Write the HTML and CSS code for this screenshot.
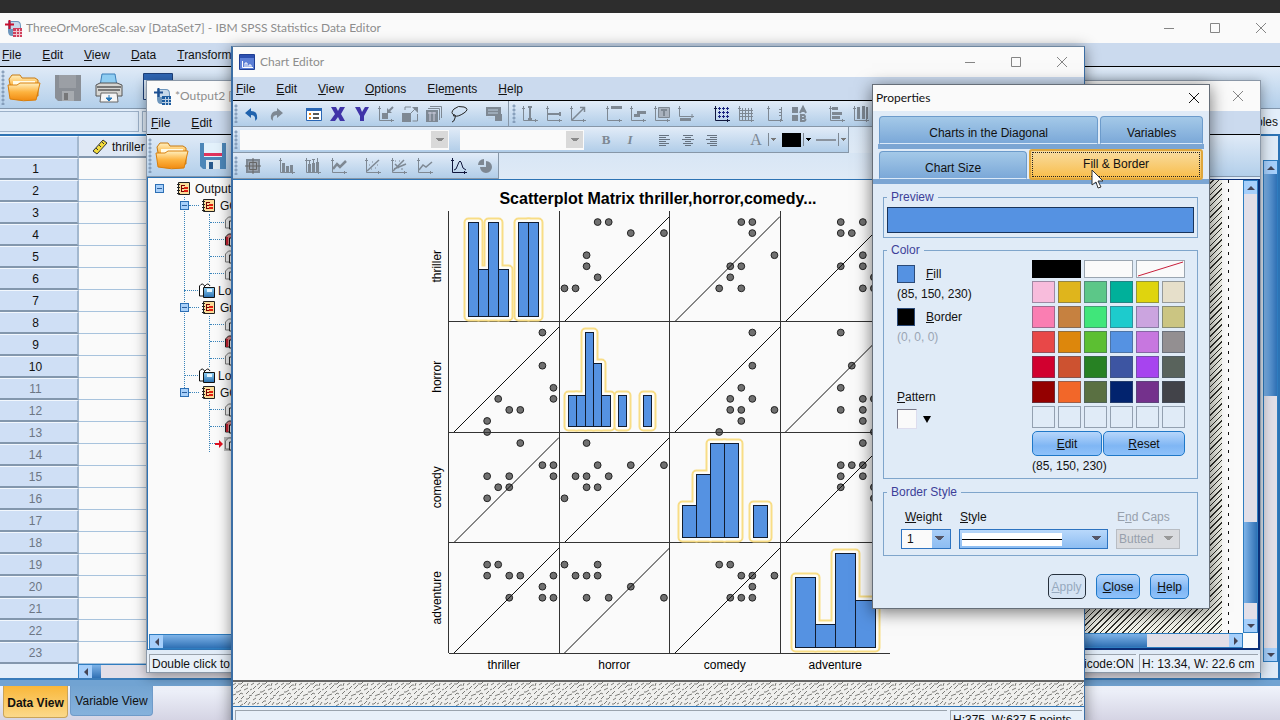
FILE: index.html
```html
<!DOCTYPE html>
<html lang="en">
<head>
<meta charset="utf-8">
<title>ThreeOrMoreScale.sav [DataSet7] - IBM SPSS Statistics Data Editor</title>
<link rel="stylesheet" href="styles.css">
</head>
<body>
<svg class="defs" aria-hidden="true">
  <defs>
    <linearGradient id="gFolder" x1="0" y1="0" x2="0" y2="1"><stop offset="0" stop-color="#fff0c0"/><stop offset=".5" stop-color="#fdb340"/><stop offset="1" stop-color="#f08a10"/></linearGradient>
    <linearGradient id="gBlue" x1="0" y1="0" x2="0" y2="1"><stop offset="0" stop-color="#8fd0f4"/><stop offset="1" stop-color="#2a6fb0"/></linearGradient>
    <pattern id="granite" width="24" height="24" patternUnits="userSpaceOnUse">
      <rect width="24" height="24" fill="#efefed"/>
      <path d="M0 3l3-2M5 2h3l2-2M1 7l4-4M8 6l3-3h2M15 1l-1 3M18 3l3-2M23 4l-3 3M3 10h2l3-2M11 8l4-2M17 8l2-1M22 9l-3 3M0 13l3-1M6 13l2-2 2 1M13 12l3-3M16 14l3-1M22 14l2-1M2 18l3-3M8 17l3-3M13 17h2l2-2M20 18l3-2M0 22l2-1M5 21l2-2h2M11 22l3-3M17 20l-2 3M19 22h2l2-2M7 24l3-2" stroke="#7d7d7a" fill="none"/>
    </pattern>
    <symbol id="folder" viewBox="0 0 34 30"><path d="M2 6l3-4h8l2 3h13l3 2v16H5z" fill="url(#gFolder)" stroke="#c87a10"/><path d="M6 8h22v4H6z" fill="#fffbe8"/><path d="M1 12h9l3-2h20l-4 17q-12 2-26-1z" fill="url(#gFolder)" stroke="#d9800e"/></symbol>
    <symbol id="disk" viewBox="0 0 26 26"><path d="M0 0h26v26H3l-3-3z" fill="currentColor"/><path d="M4 0h17v13H4z" fill="#fff" opacity=".15"/><path d="M7 16h12v10H7z" fill="#fff" opacity=".25"/><path d="M9 18h4v7H9z" fill="#555" opacity=".6"/></symbol>
    <symbol id="book" viewBox="0 0 14 15"><path d="M2.500 1.500h11v12h-11z" fill="#fbdc98" stroke="#222"/><path d="M5.500 4v7M6 4.500h3M6 7.500h3M6 10.500h3" stroke="#700" fill="none"/><path d="M8 6h4v2H8zM8 9h4v2H8z" fill="#e02010"/><path d="M1 3.500h3M1 6.500h3M1 9.500h3M1 12.500h3" stroke="#222" stroke-dasharray="1 1"/></symbol>
    <symbol id="log" viewBox="0 0 17 16"><path d="M1.500 3q3-4 5 0v10h-5z" fill="#fff" stroke="#111"/><path d="M7 3q3-4 5 0" fill="#fff" stroke="#111"/><path d="M5.500 4.500h11v10h-11z" fill="url(#gBlue)" stroke="#111"/><path d="M9 6h5v3H9z" fill="#e6f6ff"/></symbol>
    <symbol id="page" viewBox="0 0 15 14"><path d="M1.500 12V4l3-3h6v11z" fill="#eee" stroke="#777"/><path d="M5.500 13V5h9v8z" fill="#f6f6f6" stroke="#333"/><path d="M7 8h6M7 10h6" stroke="#777"/></symbol>
    <symbol id="pageR" viewBox="0 0 15 14"><path d="M1.500 12V4l3-3h6v11z" fill="#d88" stroke="#222"/><path d="M2 4h2v8H2z" fill="#c02030"/><path d="M5.500 13V5h9v8z" fill="#f6f6f6" stroke="#111"/></symbol>
    <symbol id="axes" viewBox="0 0 16 16"><path d="M1.500 0v14.500H16M0 2.500h3M13.500 13v3" fill="none" stroke="currentColor"/></symbol>
    <symbol id="min" viewBox="0 0 12 12"><path d="M1 6.500h10" stroke="currentColor"/></symbol>
    <symbol id="max" viewBox="0 0 12 12"><path d="M1.500 1.500h9v9h-9z" fill="none" stroke="currentColor"/></symbol>
    <symbol id="x" viewBox="0 0 12 12"><path d="M1 1l10 10M11 1L1 11" fill="none" stroke="currentColor"/></symbol>
    <symbol id="spss" viewBox="0 0 17 17"><path d="M3 1h9q4 0 4 5v10H7q-4 0-4-5z" fill="#6d96bd"/><path d="M6 2h6q3 0 3 4v3H6z" fill="#c6d9ea"/><path d="M0 4.500h9M4.500 0v9" stroke="var(--plus)" stroke-width="2"/><path d="M8 8h9v9H8z" fill="var(--grid)"/><path d="M8 11.500h9M8 14.500h9M11.500 9v8M14.500 9v8" stroke="#fff" stroke-width="1" opacity=".7"/></symbol>
  </defs>
</svg>
<div class="desktop">

  <section class="window main" aria-label="Data Editor">
    <header class="title">
      <svg class="app red"><use href="#spss"/></svg>
      <h1>ThreeOrMoreScale.sav [DataSet7] - IBM SPSS Statistics Data Editor</h1>
      <div class="controls"><button aria-label="Minimize"><svg><use href="#min"/></svg></button><button aria-label="Maximize"><svg><use href="#max"/></svg></button><button aria-label="Close"><svg><use href="#x"/></svg></button></div>
    </header>
    <nav class="menu"><button><u>F</u>ile</button><button><u>E</u>dit</button><button><u>V</u>iew</button><button><u>D</u>ata</button><button><u>T</u>ransform</button></nav>
    <div class="bigbar"><i class="grip"></i>
      <button aria-label="Open"><svg class="i34"><use href="#folder"/></svg></button>
      <button aria-label="Save" class="dim"><svg class="i26"><use href="#disk"/></svg></button>
      <button aria-label="Print"><svg class="i30" viewBox="0 0 30 30"><path d="M8 1h13l2 12H6z" fill="#8fcdf2" stroke="#3b7fb8"/><path d="M2 12l4-2h17l5 2v11H2z" fill="#d5d5d2" stroke="#555"/><path d="M3 14h24M4 17h22" stroke="#777" stroke-width="2"/><path d="M7 20h16l1 9H6z" fill="#f5f5f5" stroke="#666"/><path d="M15 22v4M12 25h6l-3 3z" stroke="#2878b8" fill="#2878b8"/></svg></button>
      <button aria-label="Recall" class="recall"><svg class="i30" viewBox="0 0 30 30"><path d="M.500.500h29v26H.500z" fill="#dbe8f6" stroke="#1c3f78"/><path d="M1 1h28v6H1z" fill="#2e66b4"/></svg></button>
    </div>
    <div class="valuebar"><span class="cellname"></span><span class="cellvalue"></span><span class="visible">Visible: 4 of 4 Variables</span></div>
    <div class="sheet">
      <div class="gridwrap">
      <table class="grid">
        <thead><tr><th></th><th scope="col"><span class="var"><svg viewBox="0 0 16 16"><path d="M1 12L11 1l4 3L5 15z" fill="#f3dc3c" stroke="#333"/><path d="M4 9l2 2M7 6l2 2M10 3l2 2" stroke="#333"/></svg>thriller</span></th></tr></thead>
        <tbody>
          <tr><th>1</th><td></td></tr><tr><th>2</th><td></td></tr><tr><th>3</th><td></td></tr><tr><th>4</th><td></td></tr><tr><th>5</th><td></td></tr><tr><th>6</th><td></td></tr><tr><th>7</th><td></td></tr><tr><th>8</th><td></td></tr><tr><th>9</th><td></td></tr><tr><th>10</th><td></td></tr>
        </tbody>
        <tbody class="unused">
          <tr><th>11</th><td></td></tr><tr><th>12</th><td></td></tr><tr><th>13</th><td></td></tr><tr><th>14</th><td></td></tr><tr><th>15</th><td></td></tr><tr><th>16</th><td></td></tr><tr><th>17</th><td></td></tr><tr><th>18</th><td></td></tr><tr><th>19</th><td></td></tr><tr><th>20</th><td></td></tr><tr><th>21</th><td></td></tr><tr><th>22</th><td></td></tr><tr><th>23</th><td></td></tr>
        </tbody>
      </table>
      <div class="hscroll sheeth"><button class="sb left" aria-label="Scroll left"></button><i class="thumb"></i><i class="track"></i></div>
      </div>
      <div class="vscroll sheetv"><button class="sb up" aria-label="Scroll up"></button><i class="thumb"></i><i class="track"></i><button class="sb down" aria-label="Scroll down"></button></div>
    </div>
    <div class="views"><button class="on">Data View</button><button>Variable View</button></div>
  </section>

  <section class="window output" aria-label="Output">
    <header class="title">
      <svg class="app blue"><use href="#spss"/></svg>
      <h2>*Output2 [</h2>
      <div class="controls"><button aria-label="Close"><svg><use href="#x"/></svg></button></div>
    </header>
    <nav class="menu"><button><u>F</u>ile</button><button><u>E</u>dit</button></nav>
    <div class="bigbar"><i class="grip"></i>
      <button aria-label="Open"><svg class="i34"><use href="#folder"/></svg></button>
      <button aria-label="Save"><svg class="i26" viewBox="0 0 26 26"><path d="M0 0h26v26H3l-3-3z" fill="#4c86b8"/><path d="M4 0h18v14H4z" fill="#e3f1fb"/><path d="M4 10h18v3H4z" fill="#e0335c"/><path d="M6 17h14v9H6z" fill="#dfe8ee"/><path d="M9 19h4v7H9z" fill="#28598c"/></svg></button>
    </div>
    <div class="panes">
      <div class="treepane">
        <ul class="tree">
          <li><div class="node root"><i class="tog"></i><svg><use href="#book"/></svg>Output</div>
            <ul class="l1">
              <li><div class="node"><i class="tog"></i><i class="stub"></i><svg><use href="#book"/></svg>GGraph</div>
                <ul class="l2"><li><svg><use href="#page"/></svg></li><li><svg><use href="#pageR"/></svg></li><li><svg><use href="#page"/></svg></li><li><svg><use href="#page"/></svg></li></ul></li>
              <li><div class="node leaf"><i class="stub"></i><svg><use href="#log"/></svg>Log</div></li>
              <li><div class="node"><i class="tog"></i><i class="stub"></i><svg><use href="#book"/></svg>Graph</div>
                <ul class="l2"><li><svg><use href="#page"/></svg></li><li><svg><use href="#pageR"/></svg></li><li><svg><use href="#page"/></svg></li></ul></li>
              <li><div class="node leaf"><i class="stub"></i><svg><use href="#log"/></svg>Log</div></li>
              <li><div class="node"><i class="tog"></i><i class="stub"></i><svg><use href="#book"/></svg>GGraph</div>
                <ul class="l2"><li><svg><use href="#page"/></svg></li><li><svg><use href="#pageR"/></svg></li><li class="current"><svg class="arrow" viewBox="0 0 8 8"><path d="M0 3h4V0l4 4-4 4V5H0z" fill="#e01020"/></svg><svg class="sel"><use href="#page"/></svg></li></ul></li>
            </ul></li>
        </ul>
        <div class="hscroll"><button class="sb left" aria-label="Scroll left"></button><i class="thumb"></i></div>
      </div>
      <div class="viewer">
        <div class="viewrow"><div class="hatch"></div><div class="margin"></div>
          <div class="vscroll"><button class="sb up" aria-label="Scroll up"></button><i class="track a"></i><i class="thumb"></i><i class="track b"></i><button class="sb down" aria-label="Scroll down"></button></div></div>
        <div class="hscroll"><i class="thumb"></i><i class="track"></i><button class="sb right" aria-label="Scroll right"></button></div>
      </div>
    </div>
    <footer class="status"><span class="grow">Double click to</span><span>Unicode:ON</span><span>H: 13.34, W: 22.6 cm</span></footer>
  </section>

  <section class="window chart" aria-label="Chart Editor">
    <header class="title">
      <svg class="app" viewBox="0 0 17 17"><path d="M.500.500h15v15H.500z" fill="#5c7fd6" stroke="#1f3f94"/><path d="M1 1h14v3H1z" fill="#2c4fb0"/><path d="M3.500 7v6.500H14M6 13V9h2v4M10 13v-2h2v2" fill="none" stroke="#fff"/></svg>
      <h2>Chart Editor</h2>
      <div class="controls"><button aria-label="Minimize"><svg><use href="#min"/></svg></button><button aria-label="Maximize"><svg><use href="#max"/></svg></button><button aria-label="Close"><svg><use href="#x"/></svg></button></div>
    </header>
    <nav class="menu"><button><u>F</u>ile</button><button><u>E</u>dit</button><button><u>V</u>iew</button><button><u>O</u>ptions</button><button>Ele<u>m</u>ents</button><button><u>H</u>elp</button></nav>
    <div class="bar full"><i class="grip"></i>
      <button aria-label="Undo"><svg viewBox="0 0 16 16"><path d="M7 2v3q7 0 6 8l-2 2q1-6-4-6v3L1 7z" fill="#1f62ad"/></svg></button>
      <button aria-label="Redo"><svg viewBox="0 0 16 16"><path d="M9 2v3q-7 0-6 8l2 2q-1-6 4-6v3l6-5z" fill="currentColor"/></svg></button><i class="sp14"></i>
      <button aria-label="Properties"><svg viewBox="0 0 16 16"><path d="M.500 2.500h15v12H.500z" fill="#fff" stroke="#2a66b4"/><path d="M0 2h16v3H0z" fill="#2a66b4"/><path d="M3 7h2v2H3zM3 11h2v2H3z" fill="#e88010"/><path d="M7 8h6M7 12h6" stroke="#222" stroke-width="1.500"/></svg></button>
      <button aria-label="X axis"><svg viewBox="0 0 16 16"><path d="M1 1h5l2 4 2-4h5l-4 7 4 7h-5l-2-4-3 4H0l5-7z" fill="#4034a8"/></svg></button>
      <button aria-label="Y axis"><svg viewBox="0 0 16 16"><path d="M1 1h5l2 5 3-5h4l-5 9v5H6v-5z" fill="#4034a8"/></svg></button>
      <button aria-label="Rescale"><svg viewBox="0 0 16 16"><use href="#axes"/><path d="M4 7h6v6H4zM9 2v5h5z" fill="currentColor"/><path d="M15 1l-4 4" stroke="currentColor" stroke-width="2"/></svg></button>
      <button aria-label="Enlarge"><svg viewBox="0 0 16 16"><path d="M0 7h9v9H0zM10 1h6v6z" fill="currentColor"/><path d="M3 4V1h6M15.500 8v7h-5M8 8l5-5" stroke="currentColor" fill="none"/></svg></button>
      <button aria-label="Table"><svg viewBox="0 0 16 16"><path d="M0 4h12v12H0z" fill="currentColor"/><path d="M2 2.500h11.500V14M4 .500h11.500V12" stroke="currentColor" fill="none"/><path d="M2 7h8M4 6v9M8 6v9" stroke="#ccd" fill="none"/></svg></button>
      <button aria-label="Lasso"><svg viewBox="0 0 16 16"><path d="M4 9Q0 7 4 3t10-2 0 6-9 3q-3 0-1-1t1 3-3 4" fill="none" stroke="#222"/></svg></button><i class="sp12"></i>
      <button aria-label="Label"><svg viewBox="0 0 16 16"><path d="M0 1h15v9H0zM9 8h7v7H9z" fill="currentColor"/><path d="M2 4h10M2 7h10M2 12h6" stroke="#bcd" fill="none"/></svg></button><i class="sep"></i><i class="grip"></i>
      <button aria-label="Reference line X"><svg viewBox="0 0 16 16"><use href="#axes"/><path d="M8 1v13M6 1h4M6 13h4" stroke="currentColor" stroke-width="2"/></svg></button>
      <button aria-label="Reference line Y"><svg viewBox="0 0 16 16"><use href="#axes"/><path d="M2 8h13M14 6v4" stroke="currentColor" stroke-width="2"/></svg></button>
      <button aria-label="Reference equation"><svg viewBox="0 0 16 16"><use href="#axes"/><path d="M2 14L14 2M10 1.500h4.500V6" stroke="currentColor" fill="none" stroke-width="1.500"/></svg></button><i class="sp12"></i>
      <button aria-label="Title"><svg viewBox="0 0 16 16"><use href="#axes"/><path d="M5 0h11v3H5z" fill="currentColor"/></svg></button>
      <button aria-label="Annotation"><svg viewBox="0 0 16 16"><use href="#axes"/><path d="M7 5h9v3h-6v3H4V8h3z" fill="currentColor"/></svg></button>
      <button aria-label="Text box"><svg viewBox="0 0 16 16"><use href="#axes"/><path d="M4.500 1.500h11v10h-11z" fill="#a9b2be" stroke="currentColor"/><path d="M7 4h6M10 4v6" stroke="currentColor" stroke-width="2"/></svg></button>
      <button aria-label="Footnote"><svg viewBox="0 0 16 16"><path d="M1.500 0v10.500H16M0 2.500h3M14 8v4" fill="none" stroke="currentColor"/><path d="M2 12h11v3H2z" fill="currentColor"/></svg></button><i class="sp12"></i>
      <button aria-label="Grid lines" class="ink"><svg viewBox="0 0 16 16"><use href="#axes"/><path d="M4 2.500h3M8 2.500h3M12 2.500h3M4 6.500h3M8 6.500h3M12 6.500h3M4 10.500h3M8 10.500h3M12 10.500h3M5.500 1v3M9.500 1v3M13.500 1v3M5.500 5v3M9.500 5v3M13.500 5v3M5.500 9v3M9.500 9v3M13.500 9v3" stroke="#1a2480" fill="none"/></svg></button>
      <button aria-label="Show grid"><svg viewBox="0 0 16 16"><use href="#axes"/><path d="M4.500 2v12M7.500 2v12M10.500 2v12M13.500 2v12M2 4.500h13M2 7.500h13M2 10.500h13" stroke="currentColor" fill="none"/></svg></button><i class="sp4"></i>
      <button aria-label="Derived axis"><svg viewBox="0 0 16 16"><use href="#axes"/><path d="M14.500 1v13M12 3.500h3M12 6.500h3M12 9.500h3" stroke="currentColor" fill="none"/></svg></button>
      <button aria-label="Legend"><svg viewBox="0 0 16 16"><path d="M1 1h6v6H1zM1 9h6v6H1z" fill="currentColor"/><path d="M9 7l3-6 3 6M10 5h4M10 9v6h3q3-1 0-3h-3 3q2-1 0-3z" fill="none" stroke="currentColor" stroke-width="2"/></svg></button><i class="sp14"></i>
      <button aria-label="Transpose"><svg viewBox="0 0 16 16"><use href="#axes"/><path d="M3 1h6v3H3zM3 6h10v3H3zM3 10h8v3H3z" fill="currentColor"/></svg></button>
      <button aria-label="Columns"><svg viewBox="0 0 16 16"><use href="#axes"/><path d="M4 1h3v12H4zM9 0h3v13H9zM13 1h2v12h-2z" fill="currentColor"/></svg></button>
    </div>
    <div class="barrow"><div class="bar fmt"><i class="grip"></i>
      <select class="font" disabled aria-label="Font"><option></option></select><select class="size" disabled aria-label="Font size"><option></option></select>
      <button class="serif">B</button><button class="serif it">I</button><i class="sp10"></i>
      <button aria-label="Align left"><svg viewBox="0 0 16 16"><path d="M3 3.500h10M3 5.500h7M3 7.500h11M3 9.500h7M3 11.500h10M3 13.500h7" stroke="#667280"/></svg></button>
      <button aria-label="Align center"><svg viewBox="0 0 16 16"><path d="M3 3.500h10M5 5.500h6M2 7.500h12M5 9.500h6M3 11.500h10M5 13.500h6" stroke="#667280"/></svg></button>
      <button aria-label="Align right"><svg viewBox="0 0 16 16"><path d="M3 3.500h10M6 5.500h7M2 7.500h11M6 9.500h7M3 11.500h10M6 13.500h7" stroke="#667280"/></svg></button><i class="sp20"></i>
      <button class="serif letter">A</button><i class="drop"></i><i class="swatch"></i><i class="drop dark"></i><i class="rule"></i><i class="drop"></i>
    </div></div>
    <div class="barrow"><div class="bar elems"><i class="grip"></i>
      <button aria-label="Marker"><svg viewBox="0 0 16 16"><path d="M2 2h12v12H2z" fill="#9aa3af" stroke="currentColor" stroke-width="2"/><path d="M8 0v16M0 8h16M4.500 4.500h7v7h-7z" stroke="#666" fill="none"/></svg></button><i class="sp8"></i>
      <button aria-label="Bars"><svg viewBox="0 0 16 16"><use href="#axes"/><path d="M3 5h3v9H3zM7 8h3v6H7zM11 7h3v7h-3z" fill="currentColor"/></svg></button>
      <button aria-label="Error bars"><svg viewBox="0 0 16 16"><use href="#axes"/><path d="M3 6h3v8H3zM7 5h3v9H7zM11 4h3v10h-3z" fill="currentColor"/><path d="M4.500 2v4M8.500 1v4M12.500 0v4M3 2.500h3M7 1.500h3" stroke="currentColor"/></svg></button>
      <button aria-label="Area"><svg viewBox="0 0 16 16"><use href="#axes"/><path d="M2 11l4-5 3 3 6-6" fill="none" stroke="currentColor" stroke-width="2.500"/></svg></button><i class="sp8"></i>
      <button aria-label="Fit line"><svg viewBox="0 0 16 16"><use href="#axes"/><path d="M2 13L14 2" stroke="currentColor" stroke-width="1.500"/><path d="M4 7h1M7 4h1M10 10h1M6 11h1M12 7h1" stroke="currentColor"/></svg></button>
      <button aria-label="Fit lines"><svg viewBox="0 0 16 16"><use href="#axes"/><path d="M2 13L13 2M3 11l12-5M4 6l4 4" stroke="currentColor" stroke-width="1.500"/><path d="M4 3h1M8 3h1M10 11h2" stroke="currentColor"/></svg></button>
      <button aria-label="Line"><svg viewBox="0 0 16 16"><use href="#axes"/><path d="M2 12l4-5 3 2 6-5" fill="none" stroke="currentColor" stroke-width="1.500"/></svg></button><i class="sp8"></i>
      <button aria-label="Distribution curve" class="ink"><svg viewBox="0 0 16 16"><use href="#axes"/><path d="M3 12l2-1 3-7 1-1 1 1 2 6 3 2" fill="none" stroke="currentColor"/></svg></button>
      <button aria-label="Explode slice"><svg viewBox="0 0 16 16"><path d="M9 3a6 6 0 1 1-6 6h6z" fill="currentColor"/><path d="M7 1v6H1a6 6 0 0 1 6-6z" fill="currentColor"/></svg></button>
    </div></div>
    <div class="canvas"><svg id="plot" viewBox="233 180 851 501" role="img" aria-label="Scatterplot matrix of thriller, horror, comedy and adventure"></svg></div>
    <svg class="granite"><rect width="100%" height="100%" fill="url(#granite)"/></svg>
    <footer class="status"><span class="grow"></span><span class="dims">H:375, W:637.5 points</span></footer>
  </section>

  <section class="window props" aria-label="Properties">
    <header class="title"><h2>Properties</h2><button aria-label="Close"><svg viewBox="0 0 12 12"><use href="#x"/></svg></button></header>
    <div class="tabs one"><button>Charts in the Diagonal</button><button>Variables</button></div>
    <div class="tabs two"><button>Chart Size</button><button class="on">Fill &amp; Border</button></div>
    <div class="panel">
      <fieldset class="preview"><legend>Preview</legend><div></div></fieldset>
      <fieldset class="color"><legend>Color</legend>
        <div class="picks">
          <button class="pick"><i class="fill"></i><span><u>F</u>ill</span></button><p>(85, 150, 230)</p>
          <button class="pick"><i class="black"></i><span><u>B</u>order</span></button><p class="off">(0, 0, 0)</p>
          <label for="pat"><u>P</u>attern</label><button id="pat" class="pat"><i></i><b></b></button>
        </div>
        <div class="choose">
          <div class="wide"><button class="black" aria-label="Black"></button><button class="white" aria-label="White"></button><button class="none" aria-label="No color"><svg viewBox="0 0 47 16" preserveAspectRatio="none"><path d="M1 15L46 1" stroke="#c8203c"/></svg></button></div>
          <div class="palette" id="palette"></div>
          <div class="acts"><button class="push"><u>E</u>dit</button><button class="push"><u>R</u>eset</button></div>
          <p>(85, 150, 230)</p>
        </div>
      </fieldset>
      <fieldset class="border"><legend>Border Style</legend>
        <div class="w"><label for="wt"><u>W</u>eight</label><select id="wt"><option>1</option></select></div>
        <div class="s"><label for="st"><u>S</u>tyle</label><select id="st"><option aria-label="Solid"></option></select></div>
        <div class="e"><label for="ec">E<u>n</u>d Caps</label><select id="ec" disabled><option>Butted</option></select></div>
      </fieldset>
      <div class="actions"><button class="push off" disabled><u>A</u>pply</button><button class="push"><u>C</u>lose</button><button class="push"><u>H</u>elp</button></div>
    </div>
    <svg class="cursor" viewBox="0 0 13 20"><path d="M1 1v15l4-3 2 6 3-1-3-6h5z" fill="#fff" stroke="#333"/></svg>
  </section>
</div>
<script src="script.js"></script>
</body>
</html>
```
FILE: styles.css
```css
* { box-sizing: border-box; }
body { margin: 0; height: 100vh; overflow: hidden; font: 12px/16px "Liberation Sans", Arial, sans-serif; color: #111; }
button, select { font: inherit; color: inherit; border: 0; padding: 0; margin: 0; background: none; }
i { font-style: normal; flex: none; }
h1, h2, p, ul { margin: 0; padding: 0; font-weight: normal; }
ul { list-style: none; }
svg { display: block; flex: none; }
u { text-underline-offset: 1px; }
.defs { position: absolute; width: 0; height: 0; }
.desktop { position: relative; height: 100vh; background: #2d2d2d; overflow: hidden; }

.window { position: absolute; display: flex; flex-direction: column; background: #e0ebf7; }
.main { inset: 13px 0 0 0; }
.output { inset: 80px 19px 47px 146px; border: 1px solid #8b98a8; box-shadow: 0 3px 12px rgba(0,0,0,.4); }
.chart { inset: 46px 195px -8px 231px; border: 1px solid #6f87a0; border-left: 2px solid #3b6ea5; border-right-color: #3b6ea5; box-shadow: 0 2px 14px rgba(0,0,0,.45); }
.props { top: 84px; right: 70px; width: 338px; border: 1px solid #666e78; box-shadow: 0 3px 16px rgba(0,0,0,.55); }

.title { flex: none; display: flex; align-items: center; height: 30px; padding-left: 5px; background: #fafafa; }
.title h1, .title h2 { flex: 1; margin-left: 4px; overflow: hidden; white-space: nowrap; font: 12px/20px Lato, "Open Sans", sans-serif; color: #8d8d8d; }
.title .app { width: 17px; height: 17px; }
.red { --plus: #c8102e; --grid: #d0405c; }
.blue { --plus: #1d4f91; --grid: #1d5c9e; }
.controls { display: flex; margin-right: -1px; }
.controls button { display: grid; place-items: center; width: 46px; height: 30px; color: #858585; }
.controls svg, .props .title svg { width: 12px; height: 12px; }
.main .controls { margin-right: -4px; }
.output .title { padding-left: 7px; height: 30px; }
.chart .title { padding-left: 6px; }

.menu { flex: none; display: flex; gap: 21px; height: 24px; padding: 0 2px; background: #cbdaee; border-bottom: 1px solid #000; overflow: hidden; }
.chart .menu { padding-left: 3px; }
.output .menu { padding-left: 4px; }
.grip { width: 4px; margin: 3px 2px 3px 1px; background: radial-gradient(circle, rgba(120,145,175,.8) 1px, transparent 2px) 0 0 / 4px 4px; }
.bigbar { flex: none; display: flex; align-items: center; gap: 13px; height: 42px; background: linear-gradient(#dfeaf7, #b3cfea); border-bottom: 1px solid #8397ad; }
.bigbar .grip { align-self: stretch; margin-right: -11px; }
.output .bigbar .grip { margin-right: -8px; }
.i34 { width: 34px; height: 30px; }
.i26 { width: 26px; height: 26px; }
.i30 { width: 30px; height: 30px; }
.dim { color: #8a8f96; margin-left: 1px; }
.recall { margin-left: 6px; }
.output .bigbar { gap: 11px; }

.valuebar { flex: none; display: flex; height: 27px; gap: 3px; background: #e3eefa; border-bottom: 2px solid #2d73b4; line-height: 26px; }
.cellname { width: 139px; margin: 2px 0; background: #dce9f7; border: 1px solid #9bb0c8; border-left: 0; }
.cellvalue { flex: 1; margin: 2px 0; border: 1px solid #9bb0c8; }
.visible { padding: 0 2px; }

.sheet { flex: 1; min-height: 0; display: flex; border-bottom: 2px solid #3a7cba; border-right: 2px solid #2d73b4; }
.gridwrap { flex: 1; overflow: hidden; background: #e3eefa; }
.grid { width: 100%; border-collapse: separate; border-spacing: 0; table-layout: fixed; background: #fafafa; }
.grid th { width: 79px; height: 22px; padding: 0 6px 0 0; line-height: 16px; font-weight: normal; background: #cfdff5; border: 1px solid #8397ad; border-width: 1px 2px 2px 0; border-right-color: #a3b8cf; border-top-color: #f2f7fd; }
.grid thead th { background: #c9dcf6; }
.grid thead th + th { width: auto; background: #dfe8f5; text-align: left; }
.grid td { height: 22px; padding: 0; border-bottom: 1px solid #a8c3dd; }
.unused th { color: #6c7684; }
.var { display: flex; gap: 4px; margin-left: 13px; }
.var svg { width: 16px; height: 16px; }

.hscroll { display: flex; flex: none; height: 15px; border: 1px solid #2f7dc0; background: #fafafa; }
.hscroll .thumb { flex: 1; background: linear-gradient(#7eb3e8, #2f70b4); }
.sheeth { margin-left: 78px; }
.sheeth .thumb { flex: none; width: 9px; }
.track { flex: 1; background: #e2dfe8; }
.vscroll { display: flex; flex-direction: column; flex: none; width: 15px; border: 1px solid #2f7dc0; }
.vscroll .thumb { background: linear-gradient(90deg, #7eb3e8, #2f70b4); }
.sheetv { margin: 24px 0 16px 2px; }
.sheetv .thumb { height: 222px; }
.sb { flex: none; width: 13px; height: 13px; background: #a6cffb; display: grid; place-items: center; }
.sb::before { content: ""; border: 4px solid transparent; }
.up::before { border-bottom-color: #445; border-top: 0; }
.down::before { border-top-color: #445; border-bottom: 0; }
.left::before { border-right-color: #445; border-left: 0; }
.right::before { border-left-color: #445; border-right: 0; }
.views { flex: none; display: flex; align-items: flex-start; gap: 2px; height: 40px; padding-left: 3px; border-top: 6px solid #71a3d2; background: linear-gradient(#f0f4fc, #d5d4e4); }
.views button { height: 30px; width: 83px; border: 1px solid #6f9bc9; border-top: 0; border-radius: 0 0 4px 4px; background: linear-gradient(#73a4d2, #86b2dc); }
.views .on { width: 65px; height: 32px; padding-top: 2px; font-weight: bold; background: linear-gradient(#f9b739, #fbd98b); border-color: #c9a45a; white-space: nowrap; }

.panes { flex: 1; min-height: 0; display: flex; padding-bottom: 4px; }
.treepane { flex: 0 0 420px; display: flex; flex-direction: column; background: #fafafa; border: 1px solid #2d73b4; border-right: 0; }
.treepane .hscroll { margin: 0 1px; }
.tree { flex: 1; padding: 2px 0 0 7px; }
.node { display: flex; align-items: center; height: 17px; white-space: nowrap; }
.node svg { width: 14px; height: 15px; margin-right: 5px; }
.leaf svg { width: 17px; height: 16px; margin-right: 3px; }
.tog { width: 9px; height: 9px; border: 1px solid #2d6fb4; background: linear-gradient(#2d5f9c, #2d5f9c) 1px 3px / 5px 1px no-repeat #a8d0fa; }
.root .tog { margin-right: 12px; }
.stub { width: 10px; margin-right: 2px; border-top: 1px dotted #3a84ba; }
.leaf .stub { width: 14px; margin: 0 0 0 4px; }
.l1 { margin-left: 25px; background: repeating-linear-gradient(#3a84ba 0 1px, transparent 1px 2px) 4px 0 / 1px 195px no-repeat; }
.l2 { margin-left: 29px; border-left: 1px dotted #3a84ba; }
.l2 li { display: flex; align-items: center; height: 17px; }
.l2 li::before { content: ""; width: 14px; border-top: 1px dotted #3a84ba; }
.l2 svg { width: 15px; height: 14px; }
.l2 .current::before { width: 5px; }
.l2 .arrow { width: 8px; height: 8px; margin-right: 1px; }
.sel { background: #bbb; }
.viewer { flex: 1; display: flex; flex-direction: column; margin: 2px 0 0 0; border: 1px solid #0b2f78; border-width: 1px 2px 2px 1px; background: #fafafa; }
.viewrow { flex: 1; display: flex; }
.hatch { flex: 1; background: repeating-linear-gradient(135deg, #30302c 0 1px, #f2f3ea 1px 4px); }
.margin { width: 21px; border-left: 6px solid #fafafa; background: repeating-linear-gradient(#111 0 3px, transparent 3px 9px) 0 0 / 1px 100% no-repeat; }
.viewer .a { flex: 1; }
.viewer .b { flex: none; height: 16px; }
.viewer .vscroll .thumb { height: 81px; }
.viewer .hscroll { margin-right: 15px; }
.viewer .hscroll .track { flex: 0 0 82px; }
.status { flex: none; display: flex; gap: 3px; height: 18px; padding: 0 2px; background: #e8f0f9; white-space: nowrap; }
.status span { padding: 1px 2px; border: 1px solid #9aa3ad; border-width: 1px 0 0 1px; }
.status .grow { flex: 1; }
.output .status span:last-child { width: 119px; }

.bar { display: flex; align-items: stretch; height: 26px; border-bottom: 1px solid #8797a8; background: linear-gradient(#e2ecf8, #b1cde8); color: #7e8893; overflow: hidden; }
.full { flex: none; }
.barrow { flex: none; display: flex; height: 26px; background: linear-gradient(#d8e6f5, #dfeaf6); }
.barrow .bar { border-right: 1px solid #8797a8; }
.bar button { flex: none; display: grid; place-items: center; width: 24px; }
.bar svg { width: 16px; height: 16px; overflow: visible; }
.elems button { width: 26px; }
.bar .ink { color: #10163c; }
.sep { width: 1px; margin: 0 2px; background: #8797a8; }
.sp4 { width: 5px; } .sp8 { width: 8px; } .sp10 { width: 10px; } .sp12 { width: 12px; } .sp14 { width: 14px; } .sp20 { width: 20px; }
.bar select { appearance: none; height: 20px; margin: 3px 0 0; opacity: 1; background: linear-gradient(#8a8a8a, #8a8a8a) right 5px top 8px / 8px 1px no-repeat, linear-gradient(#8a8a8a, #8a8a8a) right 7px top 10px / 4px 1px no-repeat, linear-gradient(#8a8a8a, #8a8a8a) right 6px top 9px / 6px 1px no-repeat, linear-gradient(#d9d9d9, #d9d9d9) right 1px top 1px / 17px 17px no-repeat, #fafafa; }
.font { width: 209px; }
.bar .size { width: 124px; margin-left: 11px; margin-right: 10px; }
.serif { font: bold 13px/20px "Liberation Serif", serif; }
.it { font-style: italic; }
.letter { font: 16px/20px "Liberation Serif", serif; }
.drop { width: 10px; margin: 6px 0; border-left: 1px solid #7e8893; background: linear-gradient(#777, #777) 2px 5px / 5px 1px no-repeat, linear-gradient(#777, #777) 3px 6px / 3px 1px no-repeat, linear-gradient(#777, #777) 4px 7px / 1px 1px no-repeat; }
.drop.dark { background: linear-gradient(#000, #000) 2px 5px / 5px 1px no-repeat, linear-gradient(#000, #000) 3px 6px / 3px 1px no-repeat, linear-gradient(#000, #000) 4px 7px / 1px 1px no-repeat; }
.swatch { width: 19px; margin: 6px 2px 5px 4px; background: #000; }
.rule { width: 20px; height: 2px; margin: 12px 2px 0 3px; background: #8a939e; }
.canvas { flex: 1; min-height: 0; background: #fafafa; border-top: 1px solid #2d73b4; border-bottom: 2px solid #666; }
.canvas svg { width: 851px; height: 501px; }
.granite { width: 100%; height: 24px; border-bottom: 1px solid #2d73b4; box-sizing: content-box; }
.chart .status { height: 20px; padding-top: 3px; }
.dims { width: 132px; }
.halo { fill: #f8dd86; stroke: #f8dd86; stroke-width: 10; stroke-linejoin: round; }
.inner { fill: #fdfdfa; stroke: #fdfdfa; stroke-width: 6; stroke-linejoin: round; }
.column { fill: #5592e2; stroke: #111c30; }
.dot { fill: #707070; stroke: #222; }
.axis, .diag { stroke: #333; fill: none; }
.diag { stroke: #111; }
.axis { shape-rendering: crispEdges; }
.head { font-size: 16px; font-weight: bold; text-anchor: middle; }
.lab { text-anchor: middle; }

.props .title { height: 26px; padding: 0 9px 0 3px; }
.props .title h2 { margin: 0; color: #111; }
.props .title button { color: #111; }
.tabs { display: flex; gap: 2px; margin: 5px 5px 0; padding: 0 1px; border-bottom: 5px solid #7ba5d3; }
.tabs button { height: 28px; padding-top: 5px; border: 1px solid #6c9bcb; border-bottom-color: #dbe9f8; border-radius: 4px 4px 0 0; background: linear-gradient(#a4c9e8, #7ba8d8); flex: 102; }
.tabs button:first-child { flex: 220; }
.tabs.two { margin: 0; padding: 0 6px; align-items: flex-end; height: 35px; }
.tabs.two button { flex: 173; }
.tabs.two button:first-child { flex: 149; }
.tabs.two .on { height: 31px; margin-bottom: -1px; padding: 0 0 2px; outline: 1px dotted #222; outline-offset: -4px; border: 2px solid #dea63c; border-radius: 3px; background: linear-gradient(#f8dca0, #f9bd4a); }
.panel { padding: 5px 11px 9px 10px; }
fieldset { margin: 0; min-width: 0; border: 1px solid #7fa5cb; }
legend { padding: 0 4px; color: #3d3f99; }
.preview { padding: 2px 3px 4px; }
.preview div { height: 26px; border: 1px solid #18345c; background: #5592e2; }
.color { display: flex; justify-content: space-between; margin-top: 4px; padding: 2px 12px 4px 13px; }
.color legend { margin-left: -10px; }
.picks { display: flex; flex-direction: column; align-items: flex-start; padding-top: 5px; }
.picks p { margin-top: 3px; }
.picks .off { color: #9aa5b4; }
.pick { display: flex; align-items: center; gap: 11px; height: 18px; }
.pick i { width: 18px; height: 18px; border: 1px solid #2b4a78; }
.pick + p + .pick { margin-top: 6px; }
.fill { background: #5592e2; }
.black { background: #000; }
.picks label { margin-top: 44px; }
.pat { display: flex; align-items: center; gap: 6px; margin-top: 4px; }
.pat i { width: 20px; height: 20px; background: #fafafa; border: 1px solid #dde; border-top-color: #778; border-left-color: #778; }
.pat b { border: 4px solid transparent; border-top: 7px solid #000; border-bottom: 0; }
.choose { width: 153px; }
.wide { display: grid; grid-template-columns: repeat(3, 1fr); gap: 3px; }
.wide button { height: 18px; border: 1px solid #9aa5b0; }
.wide .black { border-color: #000; }
.white, .none { background: #fafafa; }
.none svg { width: 100%; height: 100%; }
.palette { display: grid; grid-template-columns: repeat(6, 1fr); gap: 3px; margin: 3px 0; }
.palette button { height: 22px; border: 1px solid rgba(70,85,105,.5); }
.push { height: 25px; padding: 0 6px; border: 1px solid #1f78c8; border-radius: 5px; background: linear-gradient(#b7d6fb, #7fb6f4 60%, #8fc2fa); }
.acts { display: grid; grid-template-columns: 70fr 82fr; gap: 1px; margin-bottom: 2px; }
.border { display: flex; align-items: flex-end; gap: 8px; height: 72px; margin-top: 5px; padding: 0 17px 6px; }
.border label { display: block; margin-bottom: 4px; padding-left: 4px; }
.border legend { margin-left: -14px; }
.border .s label, .border .e label { padding-left: 1px; }
.border select { appearance: none; display: block; height: 20px; padding-left: 5px; border: 1px solid #2d73c0; border-radius: 0; }
.w { width: 50px; } .s { width: 149px; } .e { width: 64px; color: #97a0ac; }
.border select { width: 100%; }
.border #wt { background: linear-gradient(#556, #556) right 6px top 6px / 9px 1px no-repeat, linear-gradient(#556, #556) right 7px top 7px / 7px 1px no-repeat, linear-gradient(#556, #556) right 8px top 8px / 5px 1px no-repeat, linear-gradient(#556, #556) right 9px top 9px / 3px 1px no-repeat, linear-gradient(#a9cef8, #8dbdf2) right / 18px 100% no-repeat, #fafafa; }
.border #st { background: linear-gradient(#556, #556) right 6px top 6px / 9px 1px no-repeat, linear-gradient(#556, #556) right 7px top 7px / 7px 1px no-repeat, linear-gradient(#556, #556) right 8px top 8px / 5px 1px no-repeat, linear-gradient(#556, #556) right 9px top 9px / 3px 1px no-repeat, linear-gradient(#000, #000) 2px 9px / 100px 1px no-repeat, linear-gradient(#fff, #fff) 2px 3px / 100px 13px no-repeat, linear-gradient(#b9d8fb, #8dbdf2); }
.border #ec { padding-left: 2px; border-color: #b8bcc2; opacity: 1; color: #97a0ac; background: linear-gradient(#999, #999) right 6px top 6px / 9px 1px no-repeat, linear-gradient(#999, #999) right 7px top 7px / 7px 1px no-repeat, linear-gradient(#999, #999) right 8px top 8px / 5px 1px no-repeat, linear-gradient(#999, #999) right 9px top 9px / 3px 1px no-repeat, #d9dbdf; }
.actions { display: flex; justify-content: flex-end; gap: 10px; margin-top: 18px; padding-right: 9px; }
.actions .off { padding: 0 3px; color: #96a9be; background: #d5e3f3; border-color: #26303c; }
.cursor { position: absolute; left: 218px; top: 84px; width: 13px; height: 20px; }
```
FILE: script.js
```js
const NS = "http://www.w3.org/2000/svg";
const plot = document.getElementById("plot");

function add(name, attrs, text) {
  const el = document.createElementNS(NS, name);
  for (const key in attrs) el.setAttribute(key, attrs[key]);
  if (text) el.textContent = text;
  plot.appendChild(el);
}

const names = ["thriller", "horror", "comedy", "adventure"];
const left = 448.5, top0 = 211, cell = 110.5, step = 11.05;

// Each token is the x digit followed by the y digit; keys are row then column.
const points = {
  "0,1": "39 49 68 98 26 25 34 03 13",
  "0,2": "69 79 78 96 55 65 54 43 63",
  "0,3": "59 79 58 68 76 55 75 84 73 83",
  "1,0": "89 86 94 93 43 52 62 31 30",
  "1,2": "79 76 64 53 73 52 62 92 61 40",
  "1,3": "59 66 54 73 83 52 72 71 80",
  "2,0": "69 87 97 36 56 96 45 55 34",
  "2,1": "29 37 67 97 16 26 46 25 35 04",
  "2,3": "79 57 67 77 56 76 55 85 84",
  "3,0": "38 48 37 57 67 97 86 55 85 95",
  "3,1": "08 38 17 27 37 66 25 45 95",
  "3,2": "48 58 67 77 97 76 55 65 75"
};

// Histogram columns: x, width, top; then the shared base line.
const bars = [
  { base: 316.5, cols: [[468.5, 10, 222.5], [478.5, 10, 269.5], [488.5, 10, 222.5], [498.5, 10, 269.5], [518.5, 10, 222.5], [528.5, 10, 222.5]] },
  { base: 426.5, cols: [[568.5, 8, 395.5], [576.5, 9, 395.5], [585.5, 8, 332.5], [593.5, 8, 363.5], [601.5, 9, 395.5], [618.5, 8, 395.5], [643.5, 8, 395.5]] },
  { base: 537.5, cols: [[682.5, 14, 505.5], [696.5, 14, 474.5], [710.5, 14, 443.5], [724.5, 14, 443.5], [753.5, 14, 505.5]] },
  { base: 647.5, cols: [[795.5, 20, 577.5], [815.5, 20, 624.5], [835.5, 20, 553.5], [855.5, 20, 600.5]] }
];

for (let r = 0; r < 4; r++) {
  for (let c = 0; c < 4; c++) {
    if (r === c) continue;
    const x = left + c * cell, bottom = top0 + (r + 1) * cell;
    points[r + "," + c].split(" ").forEach(p =>
      add("circle", { class: "dot", cx: x + 5.5 + p[0] * step, cy: bottom - p[1] * step, r: 3.4 }));
    add("path", { class: "diag", d: `M${x + 5.5} ${bottom}L${x + cell} ${bottom - cell + 5.5}` });
  }
}
for (let k = 0; k < 4; k++) {
  const line = top0 + (k + 1) * cell, col = left + k * cell;
  add("path", { class: "axis", d: `M${left} ${line}H890M${col} ${top0}V653` });
}
bars.forEach(({ base, cols }) => ["halo", "inner", "column"].forEach(cls =>
  cols.forEach(([x, w, y]) => add("rect", { class: cls, x, y, width: w, height: base - y }))));
names.forEach((name, k) => {
  const y = top0 + (k + 0.5) * cell;
  add("text", { class: "lab", x: left + (k + 0.5) * cell, y: 669 }, name);
  add("text", { class: "lab", transform: `translate(441 ${y}) rotate(-90)` }, name);
});
add("text", { class: "head", x: 658, y: 204 }, "Scatterplot Matrix thriller,horror,comedy...");

const colors = ("#f8bcdc #dfb51c #5cc788 #00b09a #dfd40e #e6dfca #fa7eb2 #c68140 #40e67a #1dcbcd #cba4df #cbc582 " +
  "#e84848 #dd870c #5cbf32 #5592e2 #c777df #938f91 #d1002f #cd5230 #278123 #3d55a2 #a744ef #59635c " +
  "#940000 #f26729 #5a7042 #02236e #74318c #424349 #e0ebf7 #e0ebf7 #e0ebf7 #e0ebf7 #e0ebf7 #e0ebf7").split(" ");
const palette = document.getElementById("palette");
colors.forEach(color => {
  const b = document.createElement("button");
  b.style.backgroundColor = color;
  b.setAttribute("aria-label", color);
  palette.appendChild(b);
});
```
